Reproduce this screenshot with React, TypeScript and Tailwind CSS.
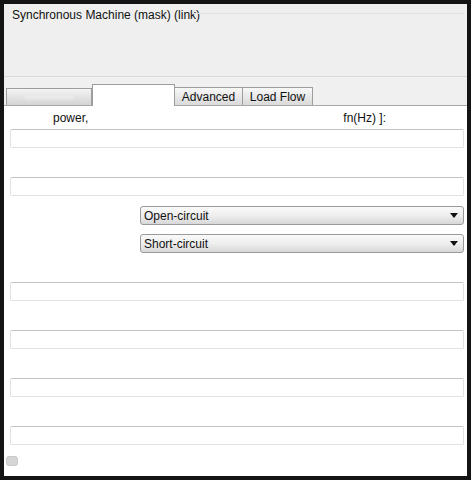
import React from "react";

const font = { fontFamily: '"Liberation Sans", Tahoma, Arial, sans-serif' };

function Box({ mt }: { mt: string }) {
  return (
    <div
      className={`${mt} ml-[6px] mr-[3px] h-[19px] rounded-[2px] border border-[#e2e2e2] border-t-[#c4c4c4] bg-white`}
    />
  );
}

function Dropdown({ label, mt }: { label: string; mt: string }) {
  return (
    <div
      className={`${mt} ml-[136px] mr-[3px] h-[19px] flex items-center justify-between rounded-[3px] border border-[#9a9a9a] bg-gradient-to-b from-[#fafafa] via-[#eeeeee] to-[#d8d8d8] pl-[3px] pr-[5px] text-[12px] text-[#111]`}
    >
      <span>{label}</span>
      <svg width="8" height="5" viewBox="0 0 8 5">
        <path d="M0 0 H8 L4 5 Z" fill="#111" />
      </svg>
    </div>
  );
}

export default function App() {
  return (
    <div className="w-[474px] h-[481px] bg-white" style={font}>
      <div className="w-[471px] h-[480px] border-4 border-[#141414] bg-white flex flex-col">
        {/* header */}
        <div className="h-[72px] bg-[#efefef] relative">
          <div className="absolute left-[188px] right-[3px] top-[9px] h-[2px] border-t border-[#dfe3e8] border-b-white" />
          <div className="pl-[8px] pt-[3px] text-[12px] text-[#111] leading-[16px]">
            Synchronous Machine (mask) (link)
          </div>
        </div>
        {/* tab strip */}
        <div className="h-[30px] bg-[#f0f0f0] border-t border-[#d9d9d9] flex items-end pl-[2px] relative">
          <div className="absolute left-0 right-0 bottom-0 h-px bg-[#a8a8a8]" />
          <div className="relative h-[17px] w-[86px] border border-[#9d9d9d] border-b-0 bg-gradient-to-b from-[#f4f4f4] to-[#d4d4d4] mb-px flex items-center justify-center">
            <div className="w-[50px] h-[4px] bg-[#ececec] blur-[1.5px] rounded-full" />
          </div>
          <div className="relative z-10 h-[22px] w-[83px] border border-[#9d9d9d] border-b-0 bg-white" />
          <div className="relative h-[18px] w-[68px] border border-[#9d9d9d] border-b-0 border-l-0 bg-gradient-to-b from-[#f8f8f8] to-[#dadada] mb-px flex items-center justify-center text-[12px] text-[#111]">
            Advanced
          </div>
          <div className="relative h-[18px] w-[70px] border border-[#9d9d9d] border-b-0 border-l-0 bg-gradient-to-b from-[#f8f8f8] to-[#dadada] mb-px flex items-center justify-center text-[12px] text-[#111]">
            Load Flow
          </div>
        </div>
        {/* content */}
        <div className="flex-1 bg-white flex flex-col">
          <div className="h-[23px] flex items-center text-[12px] text-[#111]">
            <span className="ml-[49px]">power,</span>
            <span className="ml-[255px]">fn(Hz) ]:</span>
          </div>
          <Box mt="mt-0" />
          <Box mt="mt-[29px]" />
          <Dropdown label="Open-circuit" mt="mt-[10px]" />
          <Dropdown label="Short-circuit" mt="mt-[9px]" />
          <Box mt="mt-[29px]" />
          <Box mt="mt-[29px]" />
          <Box mt="mt-[29px]" />
          <Box mt="mt-[29px]" />
          <div className="mt-[11px] ml-[2px] w-[12px] h-[10px] rounded-[3px] bg-[#d6d6d6] border border-[#c8c8c8]" />
        </div>
      </div>
    </div>
  );
}
